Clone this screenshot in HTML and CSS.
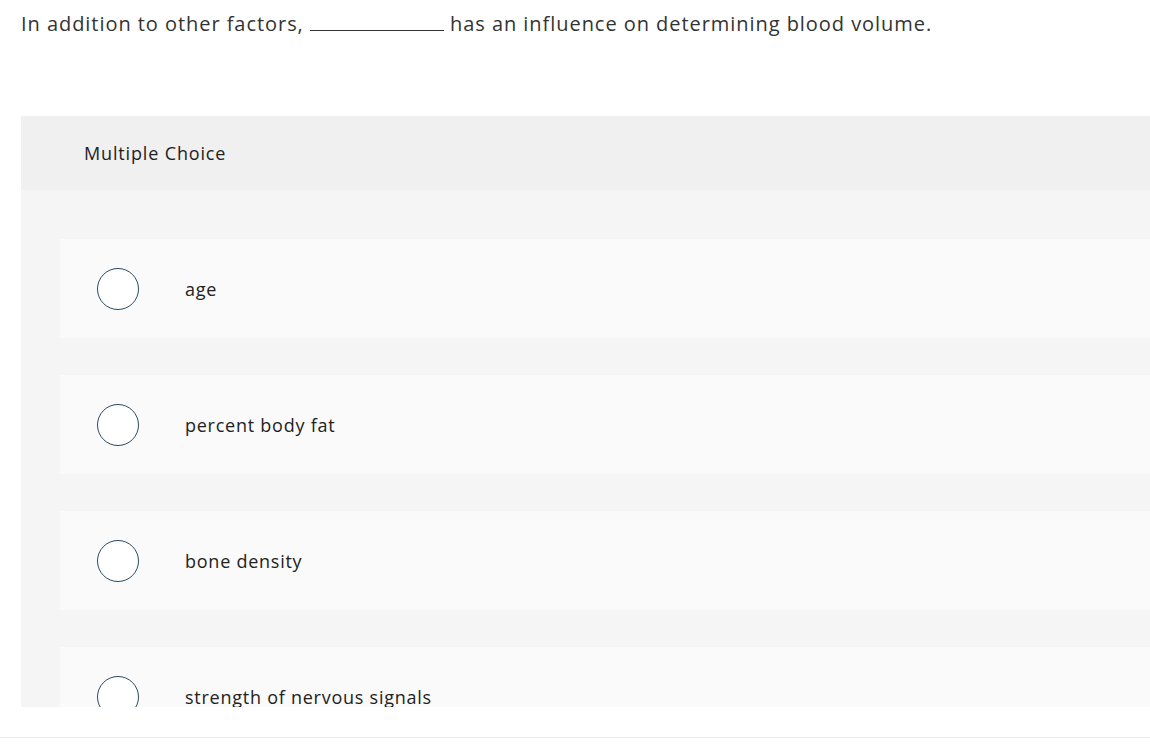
FILE: index.html
```html
<!DOCTYPE html>
<html>
<head>
<meta charset="utf-8">
<link rel="stylesheet" href="styles.css">
</head>
<body>
<p class="question">In addition to other factors, <span class="blank"></span> has an influence on determining blood volume.</p>
<div class="viewport">
  <div class="panel">
    <div class="panel-head">Multiple Choice</div>
    <div class="panel-body">
      <div class="option"><span class="radio"></span><span class="label">age</span></div>
      <div class="option"><span class="radio"></span><span class="label">percent body fat</span></div>
      <div class="option"><span class="radio"></span><span class="label">bone density</span></div>
      <div class="option"><span class="radio"></span><span class="label">strength of nervous signals</span></div>
    </div>
  </div>
</div>
<div class="footer-line"></div>
</body>
</html>
```
FILE: styles.css
```css
html, body {
  margin: 0;
  padding: 0;
  background: #ffffff;
  overflow: hidden;
}
body {
  font-family: "Open Sans", "Lato", sans-serif;
  color: #333333;
  width: 1150px;
  height: 747px;
}
.question {
  margin: 0;
  padding: 10px 0 0 21px;
  height: 105px;
  box-sizing: border-box;
  font-size: 20px;
  line-height: 28px;
  letter-spacing: 0.95px;
  color: #333333;
}
.blank {
  display: inline-block;
  width: 134px;
  border-bottom: 1px solid #333333;
  vertical-align: baseline;
  margin: 0;
}
.viewport {
  margin-top: 11px;
  margin-left: 21px;
  height: 591px;
  overflow: hidden;
}
.panel-head {
  height: 74px;
  background: #f0f0f0;
  display: flex;
  align-items: center;
  padding-left: 63px;
  font-size: 18px;
  letter-spacing: 0.85px;
  color: #222222;
}
.panel-body {
  background: #f5f5f5;
  padding: 49px 0 40px 39px;
  display: flex;
  flex-direction: column;
  gap: 37px;
}
.option {
  height: 99px;
  background: #fafafa;
  display: flex;
  align-items: center;
  padding-left: 37px;
}
.radio {
  width: 40px;
  height: 40px;
  border: 1px solid #2c4a63;
  border-radius: 50%;
  background: #ffffff;
  flex: none;
}
.label {
  margin-left: 46px;
  font-size: 18px;
  letter-spacing: 0.75px;
  color: #222222;
}
.footer-line {
  margin-top: 30px;
  height: 1px;
  background: #ececec;
}
```
